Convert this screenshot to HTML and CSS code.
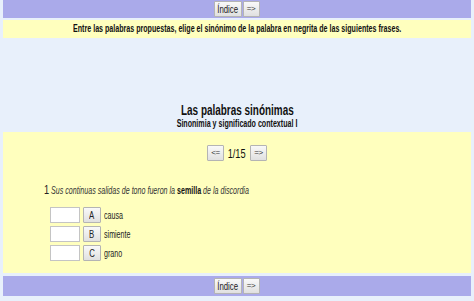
FILE: index.html
```html
<!DOCTYPE html>
<html lang="es">
<head>
<meta charset="utf-8">
<title>Las palabras sinónimas</title>
<link rel="stylesheet" href="styles.css">
</head>
<body>
<div class="page">
  <div class="bar bar-top">
    <button class="btn wide"><span class="sq">Índice</span></button><button class="btn arrow">=&gt;</button>
  </div>
  <div class="instr"><span class="sq">Entre las palabras propuestas, elige el sinónimo de la palabra en negrita de las siguientes frases.</span></div>
  <div class="head">
    <div class="title"><span class="sq">Las palabras sinónimas</span></div>
    <div class="subtitle"><span class="sq">Sinonimia y significado contextual I</span></div>
  </div>
  <div class="main">
    <div class="nav">
      <button class="btn arrow">&lt;=</button><span class="count"><span class="sq">1/15</span></span><button class="btn arrow">=&gt;</button>
    </div>
    <div class="question"><span class="sq left"><span class="num">1</span> <span class="q">Sus continuas salidas de tono fueron la <b>semilla</b> de la discordia</span></span></div>
    <div class="options">
      <div class="opt"><span class="box"></span><button class="btn letter"><span class="sq">A</span></button><span class="word"><span class="sq left">causa</span></span></div>
      <div class="opt"><span class="box"></span><button class="btn letter"><span class="sq">B</span></button><span class="word"><span class="sq left">simiente</span></span></div>
      <div class="opt"><span class="box"></span><button class="btn letter"><span class="sq">C</span></button><span class="word"><span class="sq left">grano</span></span></div>
    </div>
  </div>
  <div class="bar bar-bottom">
    <button class="btn wide"><span class="sq">Índice</span></button><button class="btn arrow">=&gt;</button>
  </div>
</div>
</body>
</html>
```
FILE: styles.css
```css
html, body { margin: 0; padding: 0; }
body {
  background: #e8f0fb;
  font-family: "Liberation Sans", Arial, sans-serif;
  color: #111;
  width: 474px;
  height: 301px;
  overflow: hidden;
}
.page { padding: 0 3px; }
.sq {
  display: inline-block;
  white-space: nowrap;
  transform: scaleX(0.71);
  transform-origin: center;
}
.sq.left { transform-origin: left center; }
.bar {
  background: #aaaaea;
  height: 18px;
  display: flex;
  justify-content: center;
  align-items: center;
}
.bar-bottom { margin-top: 3px; height: 20px; }
.btn {
  font-family: inherit;
  font-size: 10px;
  color: #222;
  background: linear-gradient(#f9f9f9, #e0e0e0);
  border: 1px solid #b4b4b4;
  border-radius: 1px;
  height: 16px;
  width: 17px;
  padding: 0;
  margin: 0 1px 0 0;
  line-height: 14px;
  display: flex;
  justify-content: center;
  align-items: center;
  overflow: visible;
}
.btn.arrow { font-size: 8px; letter-spacing: -0.5px; color: #333; }
.btn.wide { width: 28px; font-size: 11px; }
.instr {
  margin-top: 2px;
  background: #ffffbe;
  height: 18px;
  line-height: 18px;
  text-align: center;
  font-weight: bold;
  font-size: 10px;
}
.head {
  height: 94px;
  display: flex;
  flex-direction: column;
  justify-content: flex-end;
  align-items: center;
  padding-bottom: 2px;
  box-sizing: border-box;
}
.title { font-weight: bold; font-size: 14px; line-height: 15px; }
.subtitle { font-weight: bold; font-size: 10px; line-height: 12px; }
.main {
  background: #ffffbe;
  height: 141px;
  box-sizing: border-box;
  padding-top: 13px;
}
.nav {
  display: flex;
  justify-content: center;
  align-items: center;
}
.nav .btn { margin: 0; }
.count {
  width: 26px;
  display: flex;
  justify-content: center;
  font-size: 13px;
}
.question {
  margin-top: 21px;
  padding-left: 41px;
  font-size: 10px;
  color: #222;
}
.num { font-size: 13px; }
.q { font-style: italic; color: #333; }
.q b { font-style: normal; color: #111; }
.options {
  margin-top: 10px;
  padding-left: 47px;
  display: flex;
  flex-direction: column;
  gap: 3px;
}
.opt { display: flex; align-items: center; height: 16px; }
.box {
  width: 28px;
  height: 14px;
  background: #fff;
  border: 1px solid #c4c4c4;
  margin-right: 3px;
}
.btn.letter { width: 18px; font-size: 11px; margin-right: 3px; }
.word { font-size: 10px; color: #222; }
```
